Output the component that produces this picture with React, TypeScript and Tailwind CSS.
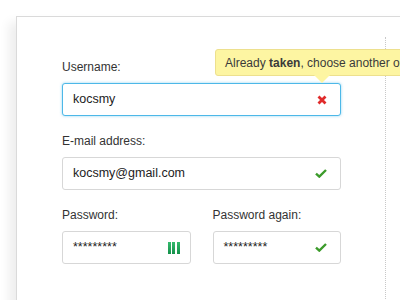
import React from "react";

function CrossIcon() {
  return (
    <svg width="10" height="10" viewBox="0 0 10 10" aria-hidden="true">
      <path d="M1.5 1.5 L8.5 8.5 M8.5 1.5 L1.5 8.5" stroke="#e02b2b" strokeWidth="2.8" strokeLinecap="butt" />
    </svg>
  );
}

function CheckIcon() {
  return (
    <svg width="12" height="9" viewBox="0 0 12 9" aria-hidden="true">
      <path d="M1 4.6 L4.3 7.6 L11 1" fill="none" stroke="#3c9b2b" strokeWidth="2.4" strokeLinejoin="miter" />
    </svg>
  );
}

function StrengthBars() {
  return (
    <div className="flex gap-[1.5px]">
      <span className="w-[3px] h-[12px] bg-gradient-to-b from-[#35bb6e] to-[#13904a]" />
      <span className="w-[3px] h-[12px] bg-gradient-to-b from-[#35bb6e] to-[#13904a]" />
      <span className="w-[3px] h-[12px] bg-gradient-to-b from-[#35bb6e] to-[#13904a]" />
    </div>
  );
}

function Field({
  label,
  value,
  icon,
  active = false,
  iconPad = "pr-[13px]",
  children,
}: {
  label: string;
  value: string;
  icon: React.ReactNode;
  active?: boolean;
  iconPad?: string;
  children?: React.ReactNode;
}) {
  return (
    <div className="relative flex flex-col">
      <label className="text-[12px] leading-4 text-[#333]">{label}</label>
      <div
        className={`mt-2 h-[33px] flex items-center justify-between pl-[10px] ${iconPad} rounded-[3px] bg-white border ${
          active ? "border-[#4db8e8] shadow-[0_0_3px_rgba(77,184,232,0.6)]" : "border-[#d7d7d7]"
        }`}
      >
        <span className="text-[12.5px] text-[#222]">{value}</span>
        {icon}
      </div>
      {children}
    </div>
  );
}

export default function App() {
  return (
    <div
      className="w-[400px] h-[300px] overflow-hidden bg-white"
      style={{ fontFamily: '"Liberation Sans", Arial, sans-serif' }}
    >
      <div className="ml-4 mt-4 h-[320px] w-[420px] flex bg-white border border-[#dadada] shadow-[-7px_6px_10px_rgba(0,0,0,0.07)]">
        <div className="w-[279px] ml-[45px] mt-[42px] flex flex-col gap-[17px]">
          <Field label="Username:" value="kocsmy" icon={<CrossIcon />} active>
            <div className="absolute left-[153px] top-[-10px] z-10 h-[27px] flex items-center pl-[9px] pr-4 whitespace-nowrap rounded-[3px] bg-[#fdf5a2] border border-[#ede08e] text-[12px] text-[#3a3a3a]">
              Already&nbsp;<b className="font-bold">taken</b>, choose another one
              <span className="absolute left-[98px] bottom-[-8px] w-0 h-0 border-l-[8px] border-r-[8px] border-t-[8px] border-l-transparent border-r-transparent border-t-[#fdf5a2]" />
            </div>
          </Field>
          <Field label="E-mail address:" value="kocsmy@gmail.com" icon={<CheckIcon />} />
          <div className="grid grid-cols-2 gap-[22px]">
            <Field label="Password:" value="*********" icon={<StrengthBars />} iconPad="pr-[10px]" />
            <Field label="Password again:" value="*********" icon={<CheckIcon />} />
          </div>
        </div>
        <div className="ml-[44px] mt-5 border-l border-dotted border-[#c8c8c8]" />
      </div>
    </div>
  );
}
